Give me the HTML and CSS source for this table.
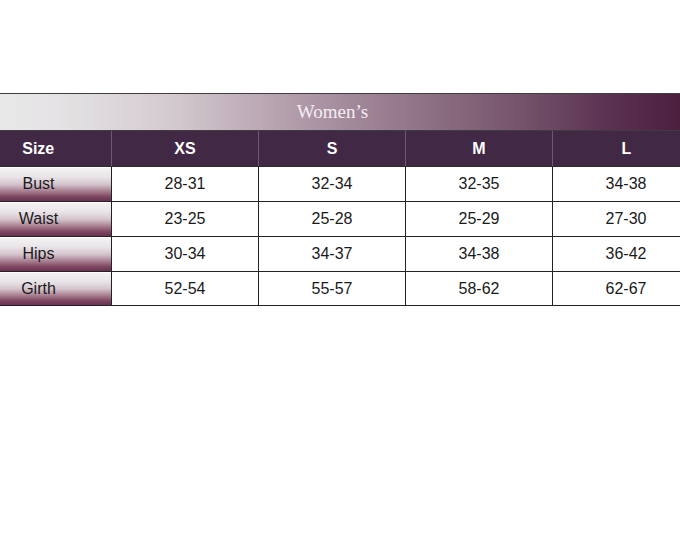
FILE: index.html
```html
<!DOCTYPE html>
<html>
<head>
<meta charset="utf-8">
<link rel="stylesheet" href="styles.css">
</head>
<body>
<div class="page">
  <table class="chart">
    <colgroup>
      <col class="c-label"><col class="c-size"><col class="c-size"><col class="c-size"><col class="c-size">
    </colgroup>
    <thead>
      <tr class="title-row"><th colspan="5" class="title">Women’s</th></tr>
      <tr class="head-row">
        <th>Size</th><th>XS</th><th>S</th><th>M</th><th>L</th>
      </tr>
    </thead>
    <tbody>
      <tr><th class="label">Bust</th><td>28-31</td><td>32-34</td><td>32-35</td><td>34-38</td></tr>
      <tr><th class="label">Waist</th><td>23-25</td><td>25-28</td><td>25-29</td><td>27-30</td></tr>
      <tr><th class="label">Hips</th><td>30-34</td><td>34-37</td><td>34-38</td><td>36-42</td></tr>
      <tr class="last"><th class="label">Girth</th><td>52-54</td><td>55-57</td><td>58-62</td><td>62-67</td></tr>
    </tbody>
  </table>
</div>
</body>
</html>
```

FILE: styles.css
```css
html, body {
  margin: 0;
  padding: 0;
  background: #ffffff;
  overflow: hidden;
}

.page {
  padding-top: 93px;
}

.chart {
  margin-left: -35px;
  width: 735px;
  border-collapse: collapse;
  table-layout: fixed;
  font-family: "Liberation Sans", Arial, sans-serif;
}

.c-label { width: 146px; }
.c-size { width: 147px; }

.title-row { height: 37px; }
.title {
  padding: 0;
  border: 1px solid #3e3e3e;
  background: linear-gradient(to right, #ebebeb 0%, #e5e3e5 12%, #d3cacf 28%, #b19ba9 45%, #93778a 60%, #76556c 75%, #5a3150 88%, #481a3a 100%);
  font-family: "Liberation Serif", "Times New Roman", serif;
  font-weight: normal;
  font-size: 19px;
  color: #f6eef4;
  text-align: center;
  vertical-align: middle;
}

.head-row { height: 36px; }
.head-row th {
  padding: 0;
  background: #412945;
  color: #ffffff;
  font-size: 16px;
  font-weight: bold;
  text-align: center;
  vertical-align: middle;
  border-top: 1px solid #24162a;
  border-bottom: 1px solid #2c2c2c;
  border-left: 1px solid #6d5a72;
}
.head-row th:first-child { border-left: none; }

tbody tr { height: 35px; }
tbody tr.last { height: 34px; }

tbody td, tbody th {
  padding: 0;
  font-size: 16px;
  font-weight: normal;
  color: #1a1a1a;
  text-align: center;
  vertical-align: middle;
  border: 1px solid #222222;
}

tbody td { background: #ffffff; }

.label {
  background: linear-gradient(to bottom, #f4f3f4 0%, #e9e4e8 28%, #d4c3cc 50%, #a67c8e 70%, #7c4560 86%, #6a2f50 100%);
  box-shadow: inset 0 1px 0 #ffffff;
}
```
